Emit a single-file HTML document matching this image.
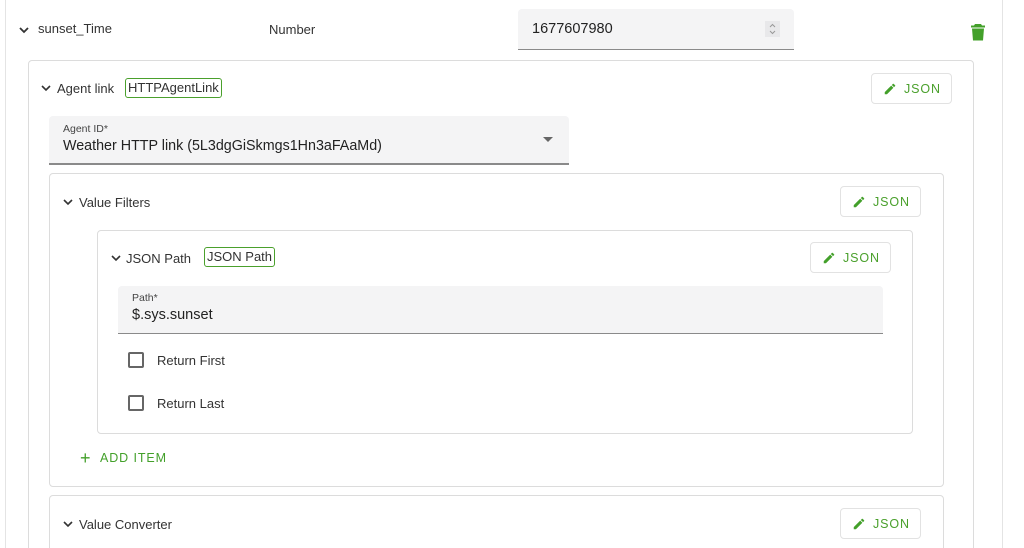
<!DOCTYPE html>
<html style="width:1024px;height:548px;overflow:hidden"><head><meta charset="utf-8"><style>
*{box-sizing:border-box;margin:0;padding:0}
body{width:1024px;height:548px;overflow:hidden;background:#fff;font-family:"Liberation Sans",Arial,sans-serif;color:#222;position:relative}
.a{position:absolute}
.box{position:absolute;border:1px solid #dcdcdc;border-radius:4px;background:#fff}
.t{position:absolute;font-size:13px;color:#333;line-height:16px}
.tag{position:absolute;border:1.5px solid #4aa02c;border-radius:3px;font-size:13px;line-height:18px;padding:0 2px;color:#333}
.btn{position:absolute;width:81px;height:31px;border:1px solid #e2e2e2;border-radius:4px;color:#4aa02c;font-size:12.5px;letter-spacing:0.9px}
.btn svg{position:absolute;left:11px;top:8px}
.btn span{position:absolute;left:32px;top:8px}
.fld{position:absolute;background:#f4f4f5;border-bottom:1px solid #8a8a8a;border-radius:4px 4px 0 0}
.lbl{position:absolute;font-size:10.5px;color:#444}
.val{position:absolute;font-size:14px;color:#222}
.cb{position:absolute;width:16px;height:16px;border:2px solid #666;border-radius:2px}
</style></head><body>
<div class="a" style="left:5px;top:0;width:1px;height:548px;background:#e4e4e4"></div>
<div class="a" style="left:1002px;top:0;width:1px;height:548px;background:#e4e4e4"></div>

<svg class="a" style="left:18px;top:25px" width="12" height="10" viewBox="0 0 12 10"><path d="M2 3 L6 7 L10 3" stroke="#333" stroke-width="1.8" fill="none"/></svg>
<div class="t" style="left:38px;top:21px">sunset_Time</div>
<div class="t" style="left:269px;top:22px">Number</div>
<div class="fld" style="left:518px;top:9px;width:276px;height:41px"></div>
<div class="val" style="left:532px;top:21px;font-size:14.5px">1677607980</div>
<div class="a" style="left:765px;top:21px;width:15px;height:16px;background:#e8e8ea"></div>
<svg class="a" style="left:767px;top:22px" width="11" height="14" viewBox="0 0 11 14"><path d="M3 5 L5.5 2.5 L8 5 M3 9 L5.5 11.5 L8 9" stroke="#999" fill="none"/></svg>
<svg class="a" style="left:970px;top:23px" width="16" height="18" viewBox="0 0 16 18"><path d="M5 1h6l1 1.5h3v2H1v-2h3z M2 5.5h12l-1 12H3z" fill="#43a02a"/></svg>

<div class="box" style="left:28px;top:60px;width:946px;height:500px"></div>
<svg class="a" style="left:40px;top:83px" width="12" height="10" viewBox="0 0 12 10"><path d="M2 3 L6 7 L10 3" stroke="#333" stroke-width="1.6" fill="none"/></svg>
<div class="t" style="left:57px;top:81px">Agent link</div>
<div class="tag" style="left:125px;top:78px">HTTPAgentLink</div>
<div class="btn" style="left:871px;top:73px"><svg width="14" height="14" viewBox="0 0 24 24"><path d="M3 17.25V21h3.75L17.81 9.94l-3.75-3.75L3 17.25zM20.71 7.04a1 1 0 000-1.41l-2.34-2.34a1 1 0 00-1.41 0l-1.83 1.83 3.75 3.75 1.83-1.83z" fill="#43a02a"/></svg><span>JSON</span></div>

<div class="fld" style="left:49px;top:116px;width:520px;height:49px;border-bottom-width:2px"></div>
<div class="lbl" style="left:63px;top:123px">Agent ID*</div>
<div class="val" style="left:63px;top:138px;font-size:14.3px">Weather HTTP link (5L3dgGiSkmgs1Hn3aFAaMd)</div>
<svg class="a" style="left:543px;top:137px" width="10" height="6"><path d="M0 0h10L5 5z" fill="#666"/></svg>

<div class="box" style="left:49px;top:173px;width:895px;height:314px"></div>
<svg class="a" style="left:62px;top:197px" width="12" height="10" viewBox="0 0 12 10"><path d="M2 3 L6 7 L10 3" stroke="#333" stroke-width="1.6" fill="none"/></svg>
<div class="t" style="left:79px;top:195px">Value Filters</div>
<div class="btn" style="left:840px;top:186px"><svg width="14" height="14" viewBox="0 0 24 24"><path d="M3 17.25V21h3.75L17.81 9.94l-3.75-3.75L3 17.25zM20.71 7.04a1 1 0 000-1.41l-2.34-2.34a1 1 0 00-1.41 0l-1.83 1.83 3.75 3.75 1.83-1.83z" fill="#43a02a"/></svg><span>JSON</span></div>

<div class="box" style="left:97px;top:230px;width:816px;height:204px"></div>
<svg class="a" style="left:110px;top:253px" width="12" height="10" viewBox="0 0 12 10"><path d="M2 3 L6 7 L10 3" stroke="#333" stroke-width="1.6" fill="none"/></svg>
<div class="t" style="left:126px;top:251px">JSON Path</div>
<div class="tag" style="left:204px;top:247px">JSON Path</div>
<div class="btn" style="left:810px;top:242px"><svg width="14" height="14" viewBox="0 0 24 24"><path d="M3 17.25V21h3.75L17.81 9.94l-3.75-3.75L3 17.25zM20.71 7.04a1 1 0 000-1.41l-2.34-2.34a1 1 0 00-1.41 0l-1.83 1.83 3.75 3.75 1.83-1.83z" fill="#43a02a"/></svg><span>JSON</span></div>

<div class="fld" style="left:118px;top:286px;width:765px;height:48px"></div>
<div class="lbl" style="left:132px;top:292px">Path*</div>
<div class="val" style="left:132px;top:307px;font-size:14.5px">$.sys.sunset</div>

<div class="cb" style="left:128px;top:352px"></div>
<div class="t" style="left:157px;top:353px">Return First</div>
<div class="cb" style="left:128px;top:395px"></div>
<div class="t" style="left:157px;top:396px">Return Last</div>

<div class="a" style="left:80px;top:449px;color:#43a02a;font-size:18px;line-height:18px">+</div>
<div class="a" style="left:100px;top:451px;color:#43a02a;font-size:12.5px;letter-spacing:0.9px">ADD ITEM</div>

<div class="box" style="left:49px;top:495px;width:895px;height:70px"></div>
<svg class="a" style="left:62px;top:519px" width="12" height="10" viewBox="0 0 12 10"><path d="M2 3 L6 7 L10 3" stroke="#333" stroke-width="1.6" fill="none"/></svg>
<div class="t" style="left:79px;top:517px">Value Converter</div>
<div class="btn" style="left:840px;top:508px"><svg width="14" height="14" viewBox="0 0 24 24"><path d="M3 17.25V21h3.75L17.81 9.94l-3.75-3.75L3 17.25zM20.71 7.04a1 1 0 000-1.41l-2.34-2.34a1 1 0 00-1.41 0l-1.83 1.83 3.75 3.75 1.83-1.83z" fill="#43a02a"/></svg><span>JSON</span></div>
</body></html>
